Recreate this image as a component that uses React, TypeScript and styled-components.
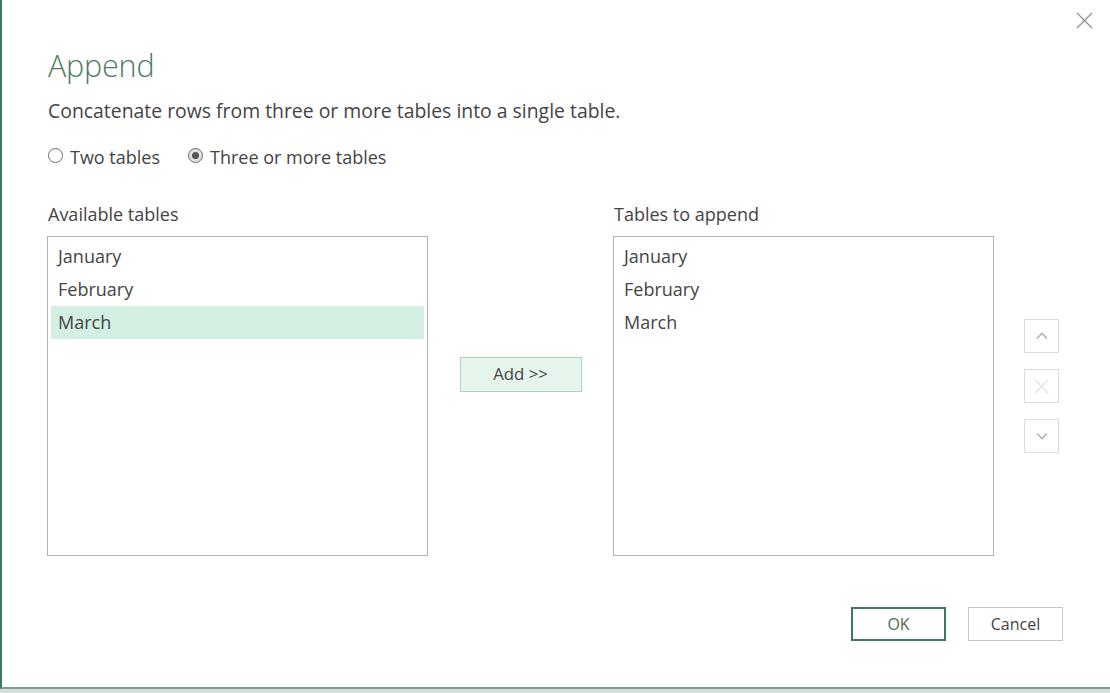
import styled, { createGlobalStyle } from "styled-components";

const GlobalStyle = createGlobalStyle`
  html, body {
    margin: 0;
    padding: 0;
    background: #ffffff;
  }
  * {
    box-sizing: border-box;
  }
`;

const Window = styled.div`
  width: 1110px;
  height: 693px;
  display: flex;
  flex-direction: column;
  overflow: hidden;
  font-family: "Open Sans", "Noto Sans", sans-serif;
  color: #444444;
`;

const Dialog = styled.div`
  flex: 1;
  background: #ffffff;
  border-left: 2px solid #3f7a58;
  border-bottom: 2px solid #7f9c8a;
  padding: 10px 16px 0 46px;
  display: flex;
  flex-direction: column;
`;

const StatusStrip = styled.div`
  height: 4px;
  background: #d9dcda;
`;

const CloseRow = styled.div`
  display: flex;
  justify-content: flex-end;
  height: 20px;
`;

const CloseButton = styled.button`
  width: 20px;
  height: 20px;
  padding: 0;
  border: none;
  background: transparent;
  display: flex;
  align-items: center;
  justify-content: center;
`;

const Title = styled.h1`
  margin: 15px 0 0 0;
  font-size: 30.5px;
  font-weight: 300;
  line-height: 40px;
  color: #4b7d60;
  letter-spacing: -0.2px;
`;

const Description = styled.p`
  margin: 13px 0 0 0;
  font-size: 19.4px;
  line-height: 26px;
  color: #444444;
`;

const RadioRow = styled.div`
  margin-top: 20px;
  display: flex;
  align-items: center;
  gap: 28px;
  height: 26px;
`;

const RadioLabel = styled.label`
  display: flex;
  align-items: center;
  gap: 7px;
  font-size: 18px;
  color: #444444;
`;

const RadioCircle = styled.span<{ $checked?: boolean }>`
  width: 15px;
  height: 15px;
  border-radius: 50%;
  border: 1px solid #6a6a6a;
  background: ${({ $checked }) => ($checked ? "#e2e2e2" : "#ffffff")};
  display: flex;
  align-items: center;
  justify-content: center;
  margin-top: -4px;

  &::after {
    content: "";
    display: ${({ $checked }) => ($checked ? "block" : "none")};
    width: 7px;
    height: 7px;
    border-radius: 50%;
    background: #555555;
  }
`;

const Panels = styled.div`
  margin-top: 32px;
  margin-left: -1px;
  display: grid;
  grid-template-columns: 381px 185px 381px 65px;
  grid-template-rows: 24px 320px;
  row-gap: 10px;
`;

const GroupLabel = styled.div<{ $col: number }>`
  grid-column: ${({ $col }) => $col};
  grid-row: 1;
  font-size: 18px;
  line-height: 24px;
  color: #444444;
  padding-left: 1px;
`;

const ListBox = styled.ul<{ $col: number }>`
  grid-column: ${({ $col }) => $col};
  grid-row: 2;
  margin: 0;
  padding: 3px 3px;
  list-style: none;
  border: 1px solid #b4b4b4;
  background: #ffffff;
`;

const ListItem = styled.li<{ $selected?: boolean }>`
  height: 33px;
  line-height: 33px;
  padding-left: 7px;
  font-size: 18px;
  color: #444444;
  background: ${({ $selected }) => ($selected ? "#d3efe1" : "transparent")};
`;

const AddCell = styled.div`
  grid-column: 2;
  grid-row: 2;
  display: flex;
  justify-content: center;
  align-items: flex-start;
  padding-top: 121px;
`;

const AddButton = styled.button`
  width: 122px;
  height: 35px;
  border: 1px solid #a4d6b8;
  background: #e5f5ec;
  font-family: inherit;
  font-size: 16.8px;
  color: #444444;
  padding: 0 0 2px 0;
`;

const SideColumn = styled.div`
  grid-column: 4;
  grid-row: 2;
  display: flex;
  flex-direction: column;
  align-items: flex-end;
  gap: 16px;
  padding-top: 83px;
`;

const SideButton = styled.button`
  width: 35px;
  height: 34px;
  border: 1px solid #dcdcdc;
  background: #ffffff;
  display: flex;
  align-items: center;
  justify-content: center;
  padding: 0;
`;

const Footer = styled.div`
  margin-top: 51px;
  display: flex;
  justify-content: flex-end;
  gap: 22px;
  padding-right: 31px;
`;

const FooterButton = styled.button<{ $primary?: boolean }>`
  width: 95px;
  height: 34px;
  background: #ffffff;
  border: ${({ $primary }) =>
    $primary ? "2px solid #3f7a58" : "1px solid #c6c6c6"};
  font-family: "Liberation Sans Narrow", "Open Sans", sans-serif;
  font-size: 16px;
  color: ${({ $primary }) => ($primary ? "#4a6b57" : "#444444")};
  padding: 0;
`;

const Chevron = ({ up }: { up?: boolean }) => (
  <svg width="14" height="10" viewBox="0 0 14 10">
    <polyline
      points={up ? "2,7.5 7,2.5 12,7.5" : "2,2.5 7,7.5 12,2.5"}
      fill="none"
      stroke="#b4b4b4"
      strokeWidth="1.6"
    />
  </svg>
);

const Cross = ({ color, size }: { color: string; size: number }) => (
  <svg width={size} height={size} viewBox="0 0 20 20">
    <line x1="2" y1="2" x2="18" y2="18" stroke={color} strokeWidth="1.4" />
    <line x1="18" y1="2" x2="2" y2="18" stroke={color} strokeWidth="1.4" />
  </svg>
);

const tables = ["January", "February", "March"];

export default function App() {
  return (
    <>
      <GlobalStyle />
      <Window>
        <Dialog>
          <CloseRow>
            <CloseButton aria-label="Close">
              <Cross color="#8a8a8a" size={19} />
            </CloseButton>
          </CloseRow>
          <Title>Append</Title>
          <Description>
            Concatenate rows from three or more tables into a single table.
          </Description>
          <RadioRow>
            <RadioLabel>
              <RadioCircle />
              Two tables
            </RadioLabel>
            <RadioLabel>
              <RadioCircle $checked />
              Three or more tables
            </RadioLabel>
          </RadioRow>
          <Panels>
            <GroupLabel $col={1}>Available tables</GroupLabel>
            <GroupLabel $col={3}>Tables to append</GroupLabel>
            <ListBox $col={1}>
              {tables.map((t) => (
                <ListItem key={t} $selected={t === "March"}>
                  {t}
                </ListItem>
              ))}
            </ListBox>
            <AddCell>
              <AddButton>Add &gt;&gt;</AddButton>
            </AddCell>
            <ListBox $col={3}>
              {tables.map((t) => (
                <ListItem key={t}>{t}</ListItem>
              ))}
            </ListBox>
            <SideColumn>
              <SideButton aria-label="Move up">
                <Chevron up />
              </SideButton>
              <SideButton aria-label="Remove">
                <Cross color="#e0e0e0" size={17} />
              </SideButton>
              <SideButton aria-label="Move down">
                <Chevron />
              </SideButton>
            </SideColumn>
          </Panels>
          <Footer>
            <FooterButton $primary>OK</FooterButton>
            <FooterButton>Cancel</FooterButton>
          </Footer>
        </Dialog>
        <StatusStrip />
      </Window>
    </>
  );
}
